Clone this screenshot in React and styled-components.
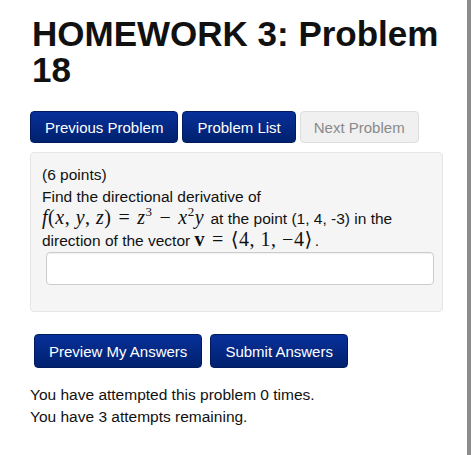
import React from 'react';
import styled, { createGlobalStyle } from 'styled-components';

const GlobalStyle = createGlobalStyle`
  html, body {
    margin: 0;
    padding: 0;
    background: #ffffff;
  }
  body {
    font-family: "Liberation Sans", Arial, Helvetica, sans-serif;
    color: #111;
  }
`;

const Page = styled.div`
  box-sizing: border-box;
  width: 471px;
  min-height: 455px;
  padding: 16px 0 0 30px;
  border-right: 4px solid #8c8c8c;
`;

const Title = styled.h1`
  margin: 0 0 23px 2px;
  font-size: 35px;
  line-height: 36px;
  font-weight: bold;
`;

const ButtonRow = styled.div`
  display: flex;
  gap: ${(p) => p.$gap || 4}px;
  margin: ${(p) => p.$margin || 0};
`;

const Button = styled.button`
  box-sizing: border-box;
  height: ${(p) => p.$height || 32}px;
  padding: 0 ${(p) => p.$pad || 14}px;
  font-family: "Liberation Sans", Arial, sans-serif;
  font-size: 15px;
  border-radius: 4px;
  cursor: pointer;
  color: ${(p) => (p.$disabled ? '#8a8a8a' : '#ffffff')};
  background: ${(p) =>
    p.$disabled ? '#f0f0f0' : 'linear-gradient(#08309a, #00216e)'};
  border: 1px solid ${(p) => (p.$disabled ? '#dedede' : '#001c5e')};
`;

const Well = styled.div`
  box-sizing: border-box;
  width: 413px;
  margin-top: 9px;
  padding: 11px 10px 26px 11px;
  background: #f5f5f5;
  border: 1px solid #e6e6e6;
  border-radius: 4px;
  font-size: 15.5px;
  line-height: 22px;
`;

const Line = styled.div`
  white-space: nowrap;
  height: 22px;
`;

const Math = styled.span`
  font-family: "Liberation Serif", "DejaVu Serif", serif;
  font-size: 20px;
  line-height: 0;
  letter-spacing: 0.5px;
  margin-right: 2px;
`;

const V = styled.span`
  font-style: italic;
`;

const Bold = styled.span`
  font-weight: bold;
`;

const Sup = styled.sup`
  font-size: 13px;
  line-height: 0;
  vertical-align: 8px;
`;

const Op = styled.span`
  margin: 0 ${(p) => p.$m || 7}px;
`;

const AnswerInput = styled.input`
  box-sizing: border-box;
  display: block;
  width: 388px;
  height: 33px;
  margin: 0 0 0 4px;
  background: #ffffff;
  border: 1px solid #cccccc;
  border-radius: 4px;
  box-shadow: inset 0 1px 1px rgba(0, 0, 0, 0.06);
`;

const Info = styled.p`
  margin: 16px 0 0 0;
  font-size: 15.5px;
  line-height: 22px;
`;

export default function App() {
  return (
    <>
      <GlobalStyle />
      <Page>
        <Title>
          HOMEWORK 3: Problem
          <br />
          18
        </Title>
        <ButtonRow $gap={4}>
          <Button $pad={14}>Previous Problem</Button>
          <Button $pad={14}>Problem List</Button>
          <Button $disabled $pad={13}>Next Problem</Button>
        </ButtonRow>
        <Well>
          <Line>(6 points)</Line>
          <Line>Find the directional derivative of</Line>
          <Line>
            <Math>
              <V>f</V>(<V>x</V>, <V>y</V>, <V>z</V>)<Op>=</Op>
              <V>z</V>
              <Sup>3</Sup>
              <Op>−</Op>
              <V>x</V>
              <Sup>2</Sup>
              <V>y</V>
            </Math>{' '}
            at the point (1, 4, -3) in the
          </Line>
          <Line>
            direction of the vector{' '}
            <Math>
              <Bold>v</Bold>
              <Op>=</Op>⟨4, 1, −4⟩
            </Math>
            .
          </Line>
          <AnswerInput type="text" />
        </Well>
        <ButtonRow $gap={8} $margin="22px 0 0 4px">
          <Button $height={34} $pad={14}>Preview My Answers</Button>
          <Button $height={34} $pad={14}>Submit Answers</Button>
        </ButtonRow>
        <Info>
          You have attempted this problem 0 times.
          <br />
          You have 3 attempts remaining.
        </Info>
      </Page>
    </>
  );
}
